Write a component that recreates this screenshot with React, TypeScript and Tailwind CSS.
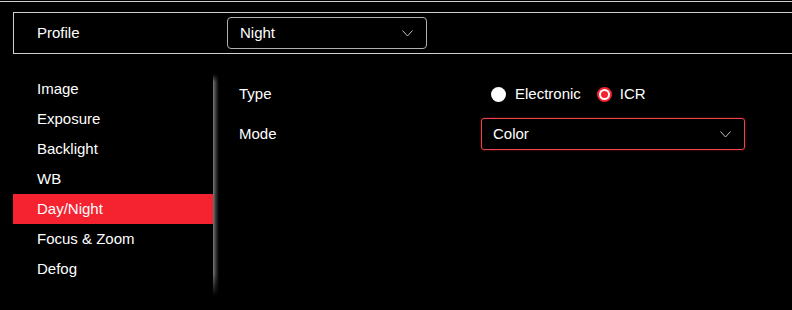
import React from "react";

const Chevron = ({ className = "" }: { className?: string }) => (
  <svg width="11" height="7" viewBox="0 0 11 7" className={className} fill="none">
    <path d="M0.5 0.5 L5.5 6 L10.5 0.5" stroke="#bfbfbf" strokeWidth="1" />
  </svg>
);

export default function App() {
  const items = ["Image", "Exposure", "Backlight", "WB", "Day/Night", "Focus & Zoom", "Defog"];
  return (
    <div
      className="w-[792px] h-[310px] bg-black text-white overflow-hidden relative text-[15px]"
      style={{ fontFamily: '"Liberation Sans", Arial, sans-serif' }}
    >
      <div className="h-px bg-[#d0d0d0] mt-px" />
      <div className="ml-[13px] mt-[10px] h-[42px] border border-r-0 border-[#d0d0d0] flex items-center">
        <div className="w-[213px] shrink-0 pl-[23px]">Profile</div>
        <div className="w-[200px] h-[32px] border border-[#b0b0b0] rounded-[4px] flex items-center justify-between pl-[12px] pr-[13px]">
          <span>Night</span>
          <Chevron />
        </div>
      </div>
      <div className="flex mt-[20px]">
        <div className="relative w-[206px] shrink-0 ml-[13px]">
          {items.map((it) => (
            <div
              key={it}
              className={`w-[200px] h-[30px] flex items-center pl-[24px] ${it === "Day/Night" ? "bg-[#f5222f]" : ""}`}
            >
              {it}
            </div>
          ))}
          <div className="absolute left-[200px] top-0 w-[6px] h-[222px] bg-gradient-to-r from-[#777] via-[#333] to-transparent [mask-image:linear-gradient(to_bottom,transparent,black_8px,black_200px,transparent)]" />
        </div>
        <div className="flex-1 pl-[20px]">
          <div className="h-[40px] flex items-center">
            <div className="w-[252px] shrink-0">Type</div>
            <div className="flex items-center">
              <div className="w-[15px] h-[15px] rounded-full bg-white" />
              <span className="ml-[9px]">Electronic</span>
              <div className="ml-[16px] w-[15px] h-[15px] rounded-full border-[2px] border-[#f5222f] bg-white flex items-center justify-center">
                <div className="w-[7px] h-[7px] rounded-full bg-[#f5222f]" />
              </div>
              <span className="ml-[8px]">ICR</span>
            </div>
          </div>
          <div className="h-[38px] mt-px flex items-center">
            <div className="w-[242px] shrink-0">Mode</div>
            <div className="w-[264px] h-[32px] border border-[#e8454c] rounded-[3px] shadow-[0_0_2px_rgba(245,34,47,0.6)] flex items-center justify-between pl-[11px] pr-[13px]">
              <span>Color</span>
              <Chevron />
            </div>
          </div>
        </div>
      </div>
    </div>
  );
}
